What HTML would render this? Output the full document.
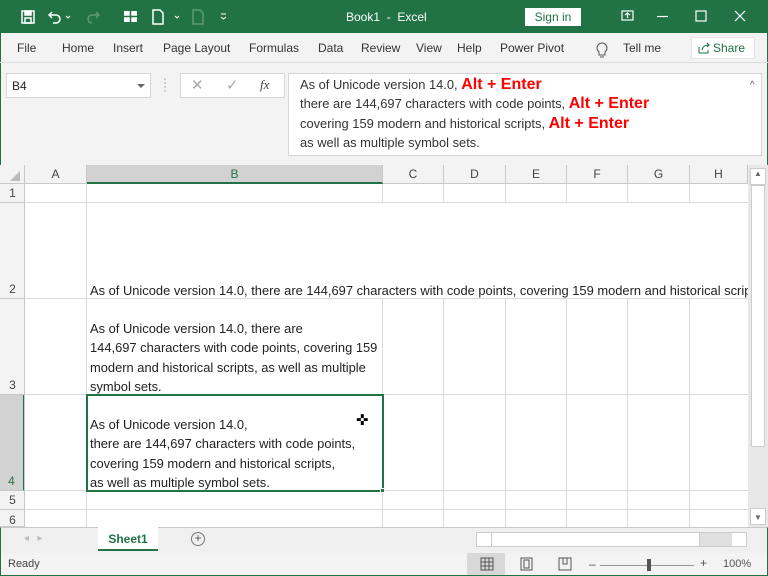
<!DOCTYPE html>
<html><head><meta charset="utf-8"><style>
*{margin:0;padding:0;box-sizing:border-box}
body{width:768px;height:576px;overflow:hidden;font-family:"Liberation Sans",sans-serif;background:#fff;position:relative;color:#222}
.a{position:absolute}
.t{font-size:12px;white-space:nowrap}
.vl{position:absolute;top:184px;height:343px;width:1px;background:#dadada}
.hl{position:absolute;left:25px;width:723px;height:1px;background:#dadada}
.ch{position:absolute;top:165px;height:19px;font-size:12px;color:#444;text-align:center;line-height:19px;border-right:1px solid #c8c8c8}
.rh{position:absolute;left:0;width:25px;font-size:12px;color:#444;text-align:center;border-bottom:1px solid #c8c8c8;background:#f3f3f3}
.cell{position:absolute;left:90px;font-size:12.9px;line-height:19.3px;color:#222;white-space:nowrap}
.red{color:#f00;font-weight:bold;font-size:16px}
</style></head><body>
<div class="a" style="left:0;top:0;width:768px;height:33px;background:#217346"></div>
<svg class="a" style="left:0;top:0" width="240" height="33" fill="none" stroke="#fff" stroke-width="1.5">
<rect x="22" y="11" width="12" height="12"/><rect x="25" y="11" width="6" height="4" fill="#fff"/><rect x="25" y="18" width="6" height="5"/>
<path d="M52 12 l-3 3 3 3 M49 15 h7 a4 4 0 0 1 0 8 h-3"/><path d="M66 16 l2 2 2-2" stroke-width="1"/>
<path d="M96 12 l3 3 -3 3 M99 15 h-7 a4 4 0 0 0 0 8" stroke="#5c9a77"/>
<rect x="124" y="11" width="13" height="11" fill="#fff" stroke="none"/><path d="M124 16.5 h13 M130.5 11 v11" stroke="#217346"/>
<path d="M153 10 h7 l3 3 v11 h-10z"/><path d="M175 16 l2 2 2-2" stroke-width="1"/>
<path d="M193 10 h7 l3 3 v11 h-10z" stroke="#5c9a77"/>
<path d="M221 14 h5 M221 17 l2.5 2 2.5-2" stroke-width="1"/>
</svg>
<div class="a t" style="left:346px;top:10px;color:#fff;font-size:12px">Book1 &nbsp;-&nbsp; Excel</div>
<div class="a t" style="left:525px;top:8px;width:56px;height:18px;background:#fff;color:#217346;text-align:center;line-height:18px">Sign in</div>
<svg class="a" style="left:600px;top:0" width="168" height="33" stroke="#fff" fill="none" stroke-width="1.2">
<rect x="22" y="11" width="11" height="9"/><path d="M27.5 13 v5 M25 15 l2.5-2 2.5 2"/>
<path d="M57 16.5 h11"/><rect x="96" y="11" width="10" height="10"/><path d="M135 11 l10 10 M145 11 l-10 10"/>
</svg>
<div class="a" style="left:0;top:33px;width:768px;height:132px;background:#f3f3f3;border-left:1px solid #217346;border-right:1px solid #217346"></div>
<div class="a" style="left:0;top:62px;width:768px;height:1px;background:#dcdcdc"></div>
<div class="a t" style="left:17px;top:41px;color:#333">File</div>
<div class="a t" style="left:62px;top:41px;color:#333">Home</div>
<div class="a t" style="left:113px;top:41px;color:#333">Insert</div>
<div class="a t" style="left:163px;top:41px;color:#333">Page Layout</div>
<div class="a t" style="left:249px;top:41px;color:#333">Formulas</div>
<div class="a t" style="left:318px;top:41px;color:#333">Data</div>
<div class="a t" style="left:361px;top:41px;color:#333">Review</div>
<div class="a t" style="left:416px;top:41px;color:#333">View</div>
<div class="a t" style="left:457px;top:41px;color:#333">Help</div>
<div class="a t" style="left:500px;top:41px;color:#333">Power Pivot</div>
<svg class="a" style="left:594px;top:39px" width="16" height="20" fill="none" stroke="#555"><path d="M5 13 a5 5 0 1 1 6 0 v3 h-6z M6 18 h4"/></svg>
<div class="a t" style="left:623px;top:41px;color:#333">Tell me</div>
<div class="a" style="left:691px;top:37px;width:64px;height:22px;background:#fff;border:1px solid #e3e3e3"></div>
<svg class="a" style="left:697px;top:41px" width="14" height="14" fill="none" stroke="#217346"><path d="M2 6 v6 h9 v-3 M5 9 q1-5 7-5 l-2-2 M12 4 l-2 2"/></svg>
<div class="a t" style="left:713px;top:41px;color:#217346">Share</div>
<div class="a" style="left:6px;top:73px;width:145px;height:25px;background:#fff;border:1px solid #d6d6d6"></div>
<div class="a t" style="left:12px;top:79px">B4</div>
<div class="a" style="left:137px;top:84px;border:4px solid transparent;border-top:4px solid #666"></div>
<div class="a" style="left:164px;top:78px;width:1px;height:14px;border-left:2px dotted #ccc"></div>
<div class="a" style="left:180px;top:73px;width:105px;height:25px;background:#fff;border:1px solid #d6d6d6"></div>
<div class="a" style="left:191px;top:76px;color:#aaa;font-size:15px">✕</div>
<div class="a" style="left:226px;top:76px;color:#aaa;font-size:15px">✓</div>
<div class="a" style="left:260px;top:77px;color:#444;font-size:13px;font-style:italic;font-family:'Liberation Serif',serif">fx</div>
<div class="a" style="left:288px;top:73px;width:474px;height:83px;background:#fff;border:1px solid #d6d6d6"></div>
<div class="a" style="left:300px;top:75px;font-size:12.9px;line-height:19.3px;color:#333;white-space:nowrap">
As of Unicode version 14.0, <span class="red">Alt + Enter</span><br>there are 144,697 characters with code points, <span class="red">Alt + Enter</span><br>covering 159 modern and historical scripts, <span class="red">Alt + Enter</span><br>as well as multiple symbol sets.</div>
<div class="a" style="left:750px;top:80px;color:#666;font-size:10px">^</div>
<div class="a" style="left:0;top:165px;width:748px;height:19px;background:#f3f3f3;border-bottom:1px solid #c8c8c8"></div>
<div class="a" style="left:10px;top:171px;border:5px solid transparent;border-right:5px solid #bbb;border-bottom:5px solid #bbb"></div>
<div class="ch" style="left:0;width:25px"></div>
<div class="ch" style="left:25px;width:62px">A</div>
<div class="ch" style="left:87px;width:296px;background:#d2d2d2;color:#217346;border-bottom:2px solid #217346">B</div>
<div class="ch" style="left:383px;width:61px">C</div>
<div class="ch" style="left:444px;width:62px">D</div>
<div class="ch" style="left:506px;width:61px">E</div>
<div class="ch" style="left:567px;width:61px">F</div>
<div class="ch" style="left:628px;width:62px">G</div>
<div class="ch" style="left:690px;width:58px">H</div>
<div class="rh" style="top:184px;height:19px;line-height:19px">1</div>
<div class="rh" style="top:203px;height:96px;line-height:172px">2</div>
<div class="rh" style="top:299px;height:96px;line-height:172px">3</div>
<div class="rh" style="top:395px;height:96px;line-height:172px;background:#d2d2d2;color:#217346;border-right:2px solid #217346">4</div>
<div class="rh" style="top:491px;height:19px;line-height:19px">5</div>
<div class="rh" style="top:510px;height:17px;line-height:20px">6</div>
<div class="a" style="left:24px;top:184px;width:1px;height:343px;background:#c8c8c8"></div>
<div class="vl" style="left:86px"></div><div class="vl" style="left:382px"></div><div class="vl" style="left:443px"></div><div class="vl" style="left:505px"></div><div class="vl" style="left:566px"></div><div class="vl" style="left:627px"></div><div class="vl" style="left:689px"></div>
<div class="hl" style="top:202px"></div><div class="hl" style="top:298px"></div><div class="hl" style="top:394px"></div><div class="hl" style="top:490px"></div><div class="hl" style="top:509px"></div>
<div class="a" style="left:87px;top:203px;width:661px;height:95px;background:#fff"></div>
<div class="cell" style="top:281px;width:658px;overflow:hidden">As of Unicode version 14.0, there are 144,697 characters with code points, covering 159 modern and historical scripts</div>
<div class="cell" style="top:319px">As of Unicode version 14.0, there are<br>144,697 characters with code points, covering 159<br>modern and historical scripts, as well as multiple<br>symbol sets.</div>
<div class="a" style="left:86px;top:394px;width:298px;height:98px;border:2px solid #217346"></div>
<div class="a" style="left:380px;top:488px;width:5px;height:5px;background:#217346;border:1px solid #fff"></div>
<div class="cell" style="top:415px">As of Unicode version 14.0,<br>there are 144,697 characters with code points,<br>covering 159 modern and historical scripts,<br>as well as multiple symbol sets.</div>
<div class="a" style="left:356px;top:411px;font-size:15px;color:#000">✜</div>
<div class="a" style="left:748px;top:165px;width:20px;height:362px;background:#e8e8e8"></div>
<div class="a" style="left:750px;top:168px;width:16px;height:17px;background:#fff;border:1px solid #ccc;font-size:8px;text-align:center;color:#666">▲</div>
<div class="a" style="left:751px;top:185px;width:14px;height:262px;background:#fff;border:1px solid #ccc"></div>
<div class="a" style="left:750px;top:508px;width:16px;height:17px;background:#fff;border:1px solid #ccc;font-size:8px;text-align:center;color:#666;line-height:17px">▼</div>
<div class="a" style="left:0;top:527px;width:768px;height:26px;background:#f0f0f0;border-top:1px solid #c8c8c8;border-left:1px solid #217346;border-right:1px solid #217346"></div>
<div class="a t" style="left:24px;top:533px;color:#bbb;font-size:10px">◂ &nbsp; ▸</div>
<div class="a" style="left:98px;top:527px;width:60px;height:24px;background:#fff;border-bottom:2px solid #217346;font-size:12px;font-weight:bold;color:#217346;text-align:center;line-height:24px">Sheet1</div>
<div class="a" style="left:191px;top:532px;width:14px;height:14px;border:1px solid #777;border-radius:50%;font-size:12px;line-height:11px;text-align:center;color:#555">+</div>
<div class="a" style="left:476px;top:532px;width:271px;height:15px;background:#fff;border:1px solid #ccc"></div>
<div class="a" style="left:491px;top:533px;width:209px;height:13px;border-left:1px solid #ccc;border-right:1px solid #ccc"></div>
<div class="a" style="left:700px;top:533px;width:32px;height:13px;background:#e0e0e0"></div>
<div class="a" style="left:0;top:553px;width:768px;height:23px;background:#f3f3f3;border:1px solid #217346;border-top:none"></div>
<div class="a t" style="left:8px;top:558px;color:#444;font-size:11px">Ready</div>
<div class="a" style="left:467px;top:553px;width:38px;height:22px;background:#d8d8d8"></div>
<svg class="a" style="left:470px;top:554px" width="160" height="20" fill="none" stroke="#555">
<rect x="11" y="4" width="12" height="12"/><path d="M11 8h12M11 12h12M15 4v12M19 4v12"/>
<rect x="51" y="4" width="11" height="12"/><rect x="54" y="6" width="5" height="8"/>
<rect x="89" y="4" width="12" height="12"/><path d="M93 4v6h4v-6"/>
</svg>
<div class="a t" style="left:589px;top:557px;color:#555">–</div>
<div class="a" style="left:600px;top:565px;width:94px;height:1px;background:#999"></div>
<div class="a" style="left:647px;top:559px;width:4px;height:12px;background:#555"></div>
<div class="a t" style="left:700px;top:556px;color:#555">+</div>
<div class="a t" style="left:723px;top:558px;color:#555;font-size:11px">100%</div>
</body></html>
